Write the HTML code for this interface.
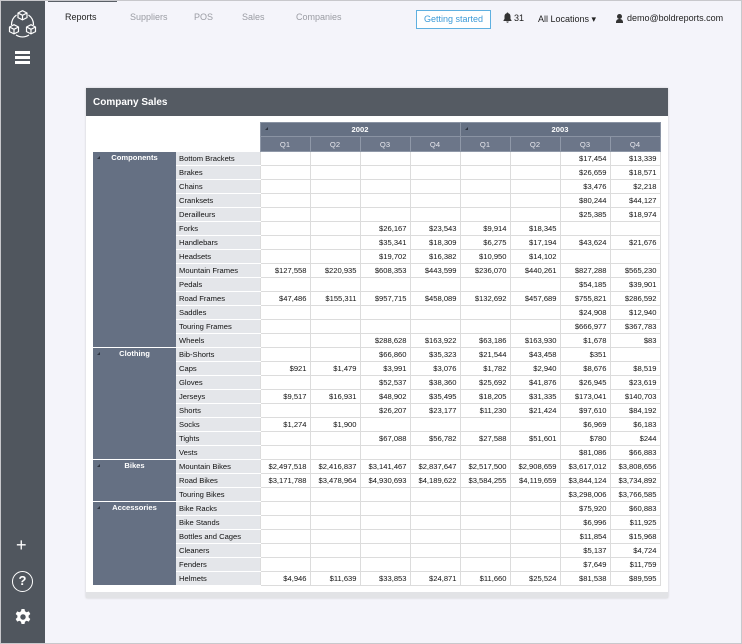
<!DOCTYPE html>
<html><head><meta charset="utf-8"><style>
*{margin:0;padding:0;box-sizing:border-box}
body{width:742px;height:644px;overflow:hidden;background:#f4f4fa;font-family:"Liberation Sans",Arial,sans-serif;position:relative}
.frame{position:absolute;left:0;top:0;width:742px;height:644px;border:1px solid #c8c8cc;pointer-events:none}
.side{position:absolute;left:0;top:0;width:45px;height:644px;background:#50565e}
.nav{position:absolute;top:12px;font-size:9px;color:#9a9ca3}
.rep{position:absolute;left:86px;top:88px;width:582px;height:510px;background:#fff;box-shadow:0 0 2px #ccc}
.rh{height:28px;background:#555b63;color:#fff;font-weight:bold;font-size:10px;padding:9px 0 0 7px}
.bot{position:absolute;left:0;bottom:0;width:582px;height:6px;background:#e2e3e6}
table{position:absolute;left:7px;top:34px;border-collapse:collapse;table-layout:fixed;font-size:7.6px;color:#111}
td{height:14px;padding:0 3px;white-space:nowrap;overflow:hidden}
td.n{text-align:right;border:1px solid #dcdcdc;width:50px}
td.p{background:#e4e6ea;width:84px;border-bottom:1px solid #fff}
td.c{background:#657083;color:#fff;font-weight:bold;vertical-align:top;text-align:center;width:83px;border-bottom:1px solid #fff;position:relative;padding-top:1px}
td.c:before,.yh:before{content:"";position:absolute;left:4px;top:4px;border-left:3px solid transparent;border-bottom:3px solid #2e3440}
.yh{background:#657083;color:#fff;font-weight:bold;text-align:center;border:1px solid #8a93a3;position:relative;height:14px}
.qh{background:#6c7689;color:#e8e8ee;text-align:center;border:1px solid #8f98a8;height:15px}
</style></head><body>
<div class="side">
<svg width="45" height="45" viewBox="0 0 45 45" style="position:absolute;left:0;top:0" fill="none" stroke="#fff" stroke-width="1.2" stroke-linejoin="round">
<path d="M16.5 15 A12 12 0 0 0 11.5 25 M28.5 15 A12 12 0 0 1 33.5 25 M16 35 A12 12 0 0 0 29 35"/>
<path d="M18 13 l4.5-2.3 4.5 2.3 v4.6 l-4.5 2.3 -4.5-2.3z M18 13 l4.5 2.3 4.5-2.3 M22.5 15.3v4.6"/>
<path d="M9.5 27 l4.5-2.3 4.5 2.3 v4.6 l-4.5 2.3 -4.5-2.3z M9.5 27 l4.5 2.3 4.5-2.3 M14 29.3v4.6"/>
<path d="M26.5 27 l4.5-2.3 4.5 2.3 v4.6 l-4.5 2.3 -4.5-2.3z M26.5 27 l4.5 2.3 4.5-2.3 M31 29.3v4.6"/>
</svg>
<div style="position:absolute;left:15px;top:51px;width:15px;height:2.5px;background:#fff;box-shadow:0 5px 0 #fff,0 10px 0 #fff"></div>
<div style="position:absolute;left:16px;top:536px;color:#fff;font-size:18px;line-height:18px">+</div>
<div style="position:absolute;left:12px;top:571px;width:21px;height:21px;border:1.6px solid #fff;border-radius:50%;color:#fff;font-size:13px;font-weight:bold;text-align:center;line-height:18px">?</div>
<svg width="18" height="18" viewBox="0 0 18 18" style="position:absolute;left:14px;top:608px"><path fill="#fff" fill-rule="evenodd" d="M7.5 1h3l.5 2.3 1.6.9 2.2-.8 1.5 2.6-1.7 1.6v1.8l1.7 1.6-1.5 2.6-2.2-.8-1.6.9-.5 2.3h-3l-.5-2.3-1.6-.9-2.2.8-1.5-2.6 1.7-1.6V7.6L1.7 6l1.5-2.6 2.2.8L7 3.3zM9 6.3a2.7 2.7 0 1 0 .01 0z"/></svg>
</div>
<div style="position:absolute;left:48px;top:0;width:69px;height:2px;background:#5a5f66"></div>
<div class="nav" style="left:65px;color:#222">Reports</div>
<div class="nav" style="left:130px">Suppliers</div>
<div class="nav" style="left:194px">POS</div>
<div class="nav" style="left:242px">Sales</div>
<div class="nav" style="left:296px">Companies</div>
<div style="position:absolute;left:416px;top:10px;width:75px;height:19px;border:1px solid #5fb0e0;color:#3d9bd8;font-size:9px;text-align:center;line-height:17px;background:#fff">Getting started</div>
<svg width="9" height="11" viewBox="0 0 9 11" style="position:absolute;left:503px;top:12px"><path fill="#333" d="M4.5 0.5c.5 0 .8.3.8.7C7 1.6 7.5 3 7.5 4.5V7l1 1.3V9H.5v-.7L1.5 7V4.5C1.5 3 2 1.6 3.7 1.2c0-.4.3-.7.8-.7zM3.3 9.5h2.4a1.2 1.2 0 0 1-2.4 0z"/></svg>
<div style="position:absolute;left:514px;top:13px;font-size:9px;color:#222">31</div>
<div style="position:absolute;left:538px;top:14px;font-size:9px;color:#222">All Locations ▾</div>
<div style="position:absolute;left:617px;top:14px;width:5px;height:5px;border-radius:50%;background:#333"></div>
<div style="position:absolute;left:616px;top:19px;width:7px;height:4px;border-radius:3px 3px 0 0;background:#333"></div>
<div style="position:absolute;left:627px;top:13px;font-size:9px;color:#222">demo@boldreports.com</div>
<div class="rep"><div class="rh">Company Sales</div>
<table>
<tr><td style="width:83px"></td><td style="width:84px"></td><td colspan="4" class="yh">2002</td><td colspan="4" class="yh">2003</td></tr>
<tr><td></td><td></td><td class="qh">Q1</td><td class="qh">Q2</td><td class="qh">Q3</td><td class="qh">Q4</td><td class="qh">Q1</td><td class="qh">Q2</td><td class="qh">Q3</td><td class="qh">Q4</td></tr>
<tr><td class="c" rowspan="14">Components</td><td class="p">Bottom Brackets</td><td class="n"></td><td class="n"></td><td class="n"></td><td class="n"></td><td class="n"></td><td class="n"></td><td class="n">$17,454</td><td class="n">$13,339</td></tr>
<tr><td class="p">Brakes</td><td class="n"></td><td class="n"></td><td class="n"></td><td class="n"></td><td class="n"></td><td class="n"></td><td class="n">$26,659</td><td class="n">$18,571</td></tr>
<tr><td class="p">Chains</td><td class="n"></td><td class="n"></td><td class="n"></td><td class="n"></td><td class="n"></td><td class="n"></td><td class="n">$3,476</td><td class="n">$2,218</td></tr>
<tr><td class="p">Cranksets</td><td class="n"></td><td class="n"></td><td class="n"></td><td class="n"></td><td class="n"></td><td class="n"></td><td class="n">$80,244</td><td class="n">$44,127</td></tr>
<tr><td class="p">Derailleurs</td><td class="n"></td><td class="n"></td><td class="n"></td><td class="n"></td><td class="n"></td><td class="n"></td><td class="n">$25,385</td><td class="n">$18,974</td></tr>
<tr><td class="p">Forks</td><td class="n"></td><td class="n"></td><td class="n">$26,167</td><td class="n">$23,543</td><td class="n">$9,914</td><td class="n">$18,345</td><td class="n"></td><td class="n"></td></tr>
<tr><td class="p">Handlebars</td><td class="n"></td><td class="n"></td><td class="n">$35,341</td><td class="n">$18,309</td><td class="n">$6,275</td><td class="n">$17,194</td><td class="n">$43,624</td><td class="n">$21,676</td></tr>
<tr><td class="p">Headsets</td><td class="n"></td><td class="n"></td><td class="n">$19,702</td><td class="n">$16,382</td><td class="n">$10,950</td><td class="n">$14,102</td><td class="n"></td><td class="n"></td></tr>
<tr><td class="p">Mountain Frames</td><td class="n">$127,558</td><td class="n">$220,935</td><td class="n">$608,353</td><td class="n">$443,599</td><td class="n">$236,070</td><td class="n">$440,261</td><td class="n">$827,288</td><td class="n">$565,230</td></tr>
<tr><td class="p">Pedals</td><td class="n"></td><td class="n"></td><td class="n"></td><td class="n"></td><td class="n"></td><td class="n"></td><td class="n">$54,185</td><td class="n">$39,901</td></tr>
<tr><td class="p">Road Frames</td><td class="n">$47,486</td><td class="n">$155,311</td><td class="n">$957,715</td><td class="n">$458,089</td><td class="n">$132,692</td><td class="n">$457,689</td><td class="n">$755,821</td><td class="n">$286,592</td></tr>
<tr><td class="p">Saddles</td><td class="n"></td><td class="n"></td><td class="n"></td><td class="n"></td><td class="n"></td><td class="n"></td><td class="n">$24,908</td><td class="n">$12,940</td></tr>
<tr><td class="p">Touring Frames</td><td class="n"></td><td class="n"></td><td class="n"></td><td class="n"></td><td class="n"></td><td class="n"></td><td class="n">$666,977</td><td class="n">$367,783</td></tr>
<tr><td class="p">Wheels</td><td class="n"></td><td class="n"></td><td class="n">$288,628</td><td class="n">$163,922</td><td class="n">$63,186</td><td class="n">$163,930</td><td class="n">$1,678</td><td class="n">$83</td></tr>
<tr><td class="c" rowspan="8">Clothing</td><td class="p">Bib-Shorts</td><td class="n"></td><td class="n"></td><td class="n">$66,860</td><td class="n">$35,323</td><td class="n">$21,544</td><td class="n">$43,458</td><td class="n">$351</td><td class="n"></td></tr>
<tr><td class="p">Caps</td><td class="n">$921</td><td class="n">$1,479</td><td class="n">$3,991</td><td class="n">$3,076</td><td class="n">$1,782</td><td class="n">$2,940</td><td class="n">$8,676</td><td class="n">$8,519</td></tr>
<tr><td class="p">Gloves</td><td class="n"></td><td class="n"></td><td class="n">$52,537</td><td class="n">$38,360</td><td class="n">$25,692</td><td class="n">$41,876</td><td class="n">$26,945</td><td class="n">$23,619</td></tr>
<tr><td class="p">Jerseys</td><td class="n">$9,517</td><td class="n">$16,931</td><td class="n">$48,902</td><td class="n">$35,495</td><td class="n">$18,205</td><td class="n">$31,335</td><td class="n">$173,041</td><td class="n">$140,703</td></tr>
<tr><td class="p">Shorts</td><td class="n"></td><td class="n"></td><td class="n">$26,207</td><td class="n">$23,177</td><td class="n">$11,230</td><td class="n">$21,424</td><td class="n">$97,610</td><td class="n">$84,192</td></tr>
<tr><td class="p">Socks</td><td class="n">$1,274</td><td class="n">$1,900</td><td class="n"></td><td class="n"></td><td class="n"></td><td class="n"></td><td class="n">$6,969</td><td class="n">$6,183</td></tr>
<tr><td class="p">Tights</td><td class="n"></td><td class="n"></td><td class="n">$67,088</td><td class="n">$56,782</td><td class="n">$27,588</td><td class="n">$51,601</td><td class="n">$780</td><td class="n">$244</td></tr>
<tr><td class="p">Vests</td><td class="n"></td><td class="n"></td><td class="n"></td><td class="n"></td><td class="n"></td><td class="n"></td><td class="n">$81,086</td><td class="n">$66,883</td></tr>
<tr><td class="c" rowspan="3">Bikes</td><td class="p">Mountain Bikes</td><td class="n">$2,497,518</td><td class="n">$2,416,837</td><td class="n">$3,141,467</td><td class="n">$2,837,647</td><td class="n">$2,517,500</td><td class="n">$2,908,659</td><td class="n">$3,617,012</td><td class="n">$3,808,656</td></tr>
<tr><td class="p">Road Bikes</td><td class="n">$3,171,788</td><td class="n">$3,478,964</td><td class="n">$4,930,693</td><td class="n">$4,189,622</td><td class="n">$3,584,255</td><td class="n">$4,119,659</td><td class="n">$3,844,124</td><td class="n">$3,734,892</td></tr>
<tr><td class="p">Touring Bikes</td><td class="n"></td><td class="n"></td><td class="n"></td><td class="n"></td><td class="n"></td><td class="n"></td><td class="n">$3,298,006</td><td class="n">$3,766,585</td></tr>
<tr><td class="c" rowspan="6">Accessories</td><td class="p">Bike Racks</td><td class="n"></td><td class="n"></td><td class="n"></td><td class="n"></td><td class="n"></td><td class="n"></td><td class="n">$75,920</td><td class="n">$60,883</td></tr>
<tr><td class="p">Bike Stands</td><td class="n"></td><td class="n"></td><td class="n"></td><td class="n"></td><td class="n"></td><td class="n"></td><td class="n">$6,996</td><td class="n">$11,925</td></tr>
<tr><td class="p">Bottles and Cages</td><td class="n"></td><td class="n"></td><td class="n"></td><td class="n"></td><td class="n"></td><td class="n"></td><td class="n">$11,854</td><td class="n">$15,968</td></tr>
<tr><td class="p">Cleaners</td><td class="n"></td><td class="n"></td><td class="n"></td><td class="n"></td><td class="n"></td><td class="n"></td><td class="n">$5,137</td><td class="n">$4,724</td></tr>
<tr><td class="p">Fenders</td><td class="n"></td><td class="n"></td><td class="n"></td><td class="n"></td><td class="n"></td><td class="n"></td><td class="n">$7,649</td><td class="n">$11,759</td></tr>
<tr><td class="p">Helmets</td><td class="n">$4,946</td><td class="n">$11,639</td><td class="n">$33,853</td><td class="n">$24,871</td><td class="n">$11,660</td><td class="n">$25,524</td><td class="n">$81,538</td><td class="n">$89,595</td></tr>
</table>
<div class="bot"></div>
</div>
<div class="frame"></div>
</body></html>
